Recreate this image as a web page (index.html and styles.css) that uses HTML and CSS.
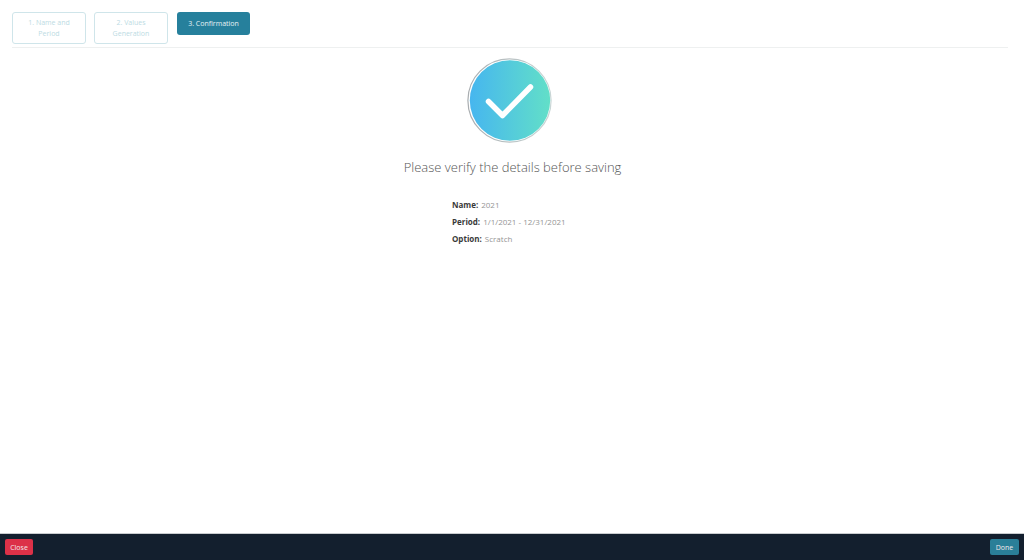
FILE: index.html
```
<!DOCTYPE html>
<html lang="en">
<head>
<meta charset="utf-8">
<title>Confirmation</title>
<link rel="stylesheet" href="styles.css">
</head>
<body>
<main class="content">
  <nav class="steps">
    <div class="step step-idle">1. Name and Period</div>
    <div class="step step-idle">2. Values Generation</div>
    <div class="step step-active">3. Confirmation</div>
  </nav>
  <section class="summary">
    <svg class="badge" width="86" height="86" viewBox="0 0 86 86" aria-hidden="true">
      <defs>
        <linearGradient id="fill" x1="0" y1="0" x2="1" y2="0">
          <stop offset="0" stop-color="#46b6ef"/>
          <stop offset="1" stop-color="#62dfc8"/>
        </linearGradient>
        <linearGradient id="ring" x1="0" y1="0" x2="1" y2="0">
          <stop offset="0" stop-color="#a9adb0"/>
          <stop offset="1" stop-color="#c9d6d6"/>
        </linearGradient>
      </defs>
      <circle cx="42.5" cy="42.5" r="41.6" fill="#fff" stroke="url(#ring)" stroke-width="1.2"/>
      <circle cx="43" cy="42.5" r="40.2" fill="url(#fill)"/>
      <path d="M21.5 43.5 L35.5 57.5 L63.5 29" fill="none" stroke="#fff" stroke-width="5.5" stroke-linecap="round" stroke-linejoin="round"/>
    </svg>
    <h1 class="title">Please verify the details before saving</h1>
    <dl class="details">
      <div class="row"><dt>Name:</dt><dd>2021</dd></div>
      <div class="row"><dt>Period:</dt><dd>1/1/2021 - 12/31/2021</dd></div>
      <div class="row"><dt>Option:</dt><dd>Scratch</dd></div>
    </dl>
  </section>
</main>
<footer class="footer">
  <button class="btn btn-close" type="button">Close</button>
  <button class="btn btn-done" type="button">Done</button>
</footer>
</body>
</html>
```
FILE: styles.css
```
* { box-sizing: border-box; }
html, body { height: 100%; }
body {
  margin: 0;
  display: flex;
  flex-direction: column;
  height: 560px;
  overflow: hidden;
  background: #fff;
  font-family: "Open Sans", "Noto Sans", sans-serif;
  color: #333;
}
.content { flex: 1; padding: 12px 16px 0 12px; }
.steps {
  display: flex;
  align-items: flex-start;
  gap: 8px;
  height: 36px;
  border-bottom: 1px solid #eef0f0;
}
.step {
  border-radius: 3px;
  font-size: 7px;
  line-height: 11px;
  text-align: center;
}
.step-idle {
  width: 74px;
  height: 32px;
  padding: 4px 8px;
  border: 1px solid #cfe5ea;
  color: #bcdbe3;
  background: #fff;
}
.step-active {
  width: 73px;
  height: 23px;
  padding: 6px 0;
  background: #26809c;
  color: #e6f2f5;
  margin-left: 1px;
}
.summary { display: flex; flex-direction: column; align-items: center; }
.badge { margin-top: 10px; display: block; }
.title {
  margin: 13px 0 0;
  padding-left: 5px;
  font-size: 13px;
  line-height: 20px;
  font-weight: 300;
  color: #555;
}
.details {
  margin: 19px 0 0;
  width: 116px;
  font-size: 8px;
  line-height: 17px;
}
.row { display: flex; gap: 3px; white-space: nowrap; }
.row dt { font-weight: 700; color: #3a3a3a; }
.row dd { margin: 0; color: #959595; }
.footer {
  height: 27px;
  background: #131f2e;
  border-top: 1px solid #c9cccf;
  display: flex;
  justify-content: space-between;
  align-items: center;
  padding: 0 5px;
}
.btn {
  border: 0;
  border-radius: 2px;
  height: 16px;
  padding: 0;
  font-family: inherit;
  font-size: 7px;
  color: #f3e8ea;
}
.btn-close { width: 28px; background: #dc3148; }
.btn-done { width: 29px; background: #2a7f98; }
```
